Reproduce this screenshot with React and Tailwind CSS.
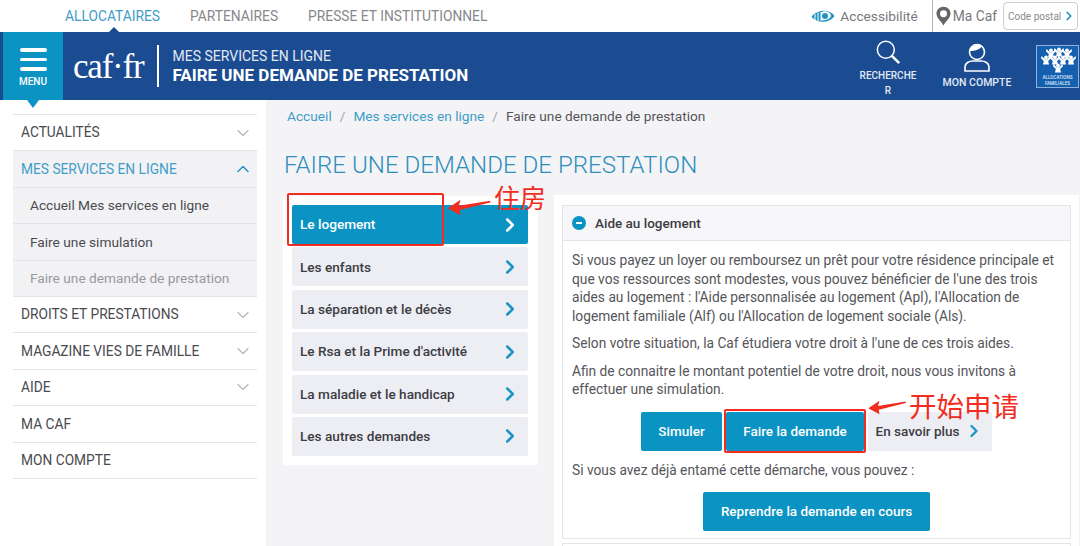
import React from 'react';
import { ChevronDown, ChevronUp, ChevronRight } from 'lucide-react';

const font = 'font-["Roboto","Liberation_Sans",sans-serif]';

function SideRow({ label, open, active }) {
    return (
        <div className={`flex h-[36.4px] items-center justify-between border-b border-[#e4e4e8] pl-[8px] pr-[4px] text-[13.75px] ${active ? 'bg-[#f2f2f5] text-[#3f9dc8]' : 'text-[#4a4a4f]'}`}>
            <span>{label}</span>
            {open
                ? <ChevronUp size={20} strokeWidth={1.8} className="text-[#1f94c4]" />
                : <ChevronDown size={20} strokeWidth={1.4} className={'text-[#b5b5ba]'} />}
        </div>
    );
}

function SubRow({ label, muted }) {
    return (
        <div className={`flex h-[36.4px] items-center border-b border-[#e4e4e8] bg-[#f2f2f5] pl-[17px] text-[13.7px] ${muted ? 'text-[#98989e]' : 'text-[#4a4a4f]'}`}>
            {label}
        </div>
    );
}

function Category({ label, active }) {
    return (
        <div className={`flex h-[39px] items-center justify-between rounded-[2px] pl-[8px] pr-[7px] text-[13.6px] font-medium ${active ? 'bg-[#0a93c3] text-white' : 'bg-[#edeef4] text-[#3c3c42]'}`}>
            <span>{label}</span>
            <ChevronRight size={22} strokeWidth={2.8} className={active ? 'text-white' : 'text-[#1b94c6]'} />
        </div>
    );
}

function RedArrow({ className }) {
    return (
        <svg viewBox="0 0 50 20" className={className}>
            <path d="M0 11 L15 1 L13 8 L50 2 L50 4 L14 13 L15 19 Z" fill="#f22c1e" />
        </svg>
    );
}

function Doll({ x, y }) {
    return (
        <g transform={`translate(${x} ${y})`}>
            <circle cx="0" cy="-2.6" r="1.9" />
            <path d="M-4.4 -4 L-1.2 -0.8 H1.2 L4.4 -4 L5 -1.8 L2.2 1 L3 4.6 H-3 L-2.2 1 L-5 -1.8 Z" />
        </g>
    );
}

function CafLogo() {
    // petit logo des allocations familiales
    return (
        <div className="flex h-[43px] w-[43px] flex-col items-center border border-[#8fb0d8] bg-[#1560ae]">
            <svg viewBox="0 0 40 29" className="h-[29px] w-[40px]" fill="#ffffff">
                <Doll x={13} y={7} />
                <Doll x={21} y={6} />
                <Doll x={29} y={7} />
                <Doll x={8} y={14} />
                <Doll x={17} y={14} />
                <Doll x={25} y={14} />
                <Doll x={33} y={14} />
                <Doll x={20} y={22} />
            </svg>
            <span className="text-center text-[4.6px] font-medium leading-[5.5px] text-[#dbe7f5]">ALLOCATIONS<br />FAMILIALES</span>
        </div>
    );
}

export default function App() {
    return (
        <div className={`relative h-[546px] w-[1080px] overflow-hidden bg-white ${font}`}>
            {/* barre du haut */}
            <div className="flex h-[32px] items-center text-[13.8px] text-[#87878c]">
                <div className="ml-[65px] flex gap-[30px]">
                    <span className="text-[#3f9dc8]">ALLOCATAIRES</span>
                    <span>PARTENAIRES</span>
                    <span>PRESSE ET INSTITUTIONNEL</span>
                </div>
                <div className="ml-auto flex h-full items-center">
                    <svg viewBox="0 0 24 14" className="mr-[5px] h-[14px] w-[24px]">
                        <path d="M0.5 8 C5 1 18 -1 23.5 7 C19 14 6 15 0.5 8Z" fill="#1f94c4" />
                        <path d="M10 3 C16 1 20 4 20 7 C19 10 14 12 10 11Z" fill="#ffffff" />
                        <circle cx="14" cy="7" r="3" fill="#1f94c4" />
                        <path d="M4 5v6M7 3.5v8.5M10 3v9" stroke="#ffffff" strokeWidth="1" />
                    </svg>
                    <span className="text-[13.7px] text-[#77777c]">Accessibilité</span>
                    <div className="ml-[14px] flex h-full items-center border-l border-[#b4b4b8] pl-[3px]">
                        <svg viewBox="0 0 16 20" className="h-[20px] w-[15px]">
                            <path fillRule="evenodd" d="M8 0 C3.5 0 0.5 3.2 0.5 7.4 C0.5 12 5 15 8 20 C11 15 15.5 12 15.5 7.4 C15.5 3.2 12.5 0 8 0Z M8 3.8 A3.7 3.7 0 1 1 8 11.2 A3.7 3.7 0 1 1 8 3.8Z" fill="#66666b" />
                        </svg>
                        <span className="ml-[2px] text-[13.8px] text-[#77777c]">Ma Caf</span>
                        <div className="ml-[6px] mr-[2px] flex h-[28px] w-[75px] items-center justify-between rounded-[4px] border border-[#cfcfd3] pl-[4px] pr-[1px] text-[10px] text-[#8a8a8f]">
                            <span>Code postal</span>
                            <ChevronRight size={14} strokeWidth={3} className="text-[#1f94c4]" />
                        </div>
                    </div>
                </div>
            </div>

            {/* bandeau bleu */}
            <div className="relative flex h-[68px] items-center bg-[#1b4b91] text-white">
                <div className="absolute left-[109px] top-[-5px] h-0 w-0 border-x-[5px] border-b-[5px] border-x-transparent border-b-[#1b4b91]" />
                <div className="relative ml-[3px] flex h-full w-[60px] flex-col items-center bg-[#0a93c3] pt-[16px]">
                    <div className="flex flex-col gap-[6px]">
                        <div className="h-[3.5px] w-[27px] rounded-full bg-white" />
                        <div className="h-[3.5px] w-[27px] rounded-full bg-white" />
                        <div className="h-[3.5px] w-[27px] rounded-full bg-white" />
                    </div>
                    <span className="mt-[5px] text-[10px] font-medium leading-[12px]">MENU</span>
                    <div className="absolute bottom-[-8px] left-[24px] h-0 w-0 border-x-[6px] border-t-[8px] border-x-transparent border-t-[#0a93c3]" />
                </div>
                <span className="ml-[10px] w-[72px] whitespace-nowrap font-['Liberation_Serif',serif] text-[35px] leading-none tracking-[-1.2px]">caf·fr</span>
                <div className="ml-[12px] h-[42px] w-[1.5px] bg-white" />
                <div className="ml-[14px] flex flex-col">
                    <span className="text-[14px] leading-[18px] text-[#e2e9f4]">MES SERVICES EN LIGNE</span>
                    <span className="text-[17px] font-bold leading-[21px]">FAIRE UNE DEMANDE DE PRESTATION</span>
                </div>
                <div className="ml-auto flex h-full items-start">
                    <div className="flex w-[60px] flex-col items-center pt-[8px]">
                        <svg viewBox="0 0 28 28" className="h-[25px] w-[25px]" fill="none" stroke="#ffffff" strokeWidth="1.7">
                            <circle cx="11" cy="11" r="9.5" />
                            <path d="M17.5 17.5 L26 26" strokeWidth="2.8" />
                        </svg>
                        <span className="mt-[4px] w-[60px] break-all text-center text-[10px] font-medium leading-[14.5px] text-[#e2e9f4]">RECHERCHER</span>
                    </div>
                    <div className="ml-[24px] flex w-[70px] flex-col items-center pt-[11px]">
                        <svg viewBox="0 0 28 30" className="h-[30px] w-[28px]" fill="none" stroke="#ffffff" strokeWidth="1.6">
                            <circle cx="14" cy="9" r="7.5" />
                            <path d="M7 8 C11 8 17 7 19 3 L14 1.5 L8 4Z" fill="#ffffff" stroke="none" />
                            <path d="M2 28 V24 C2 20 6 18 10 18 H18 C22 18 26 20 26 24 V28 Z" />
                        </svg>
                        <span className="mt-[3px] text-[10.5px] font-medium leading-[14px] text-[#e2e9f4]">MON COMPTE</span>
                    </div>
                    <div className="ml-[24px] mr-[1px] mt-[13px]">
                        <CafLogo />
                    </div>
                </div>
            </div>

            <div className="flex h-[446px]">
                {/* menu de gauche */}
                <aside className="w-[266px] shrink-0 px-[13px] pr-[9px] pt-[14px]">
                    <div className="border-t border-[#e4e4e8]">
                        <SideRow label="ACTUALITÉS" />
                        <SideRow label="MES SERVICES EN LIGNE" open active />
                        <SubRow label="Accueil Mes services en ligne" />
                        <SubRow label="Faire une simulation" />
                        <SubRow label="Faire une demande de prestation" muted />
                        <SideRow label="DROITS ET PRESTATIONS" />
                        <SideRow label="MAGAZINE VIES DE FAMILLE" />
                        <SideRow label="AIDE" />
                        <div className="flex h-[36.4px] items-center border-b border-[#e4e4e8] pl-[8px] text-[13.75px] text-[#4a4a4f]">MA CAF</div>
                        <div className="flex h-[36.4px] items-center border-b border-[#e4e4e8] pl-[8px] text-[13.75px] text-[#4a4a4f]">MON COMPTE</div>
                    </div>
                </aside>

                <main className="flex-1 bg-[#f4f4f7]">
                    <div className="flex h-[33px] items-center pl-[21px] text-[13.7px]">
                        <span className="text-[#3f9dc8]">Accueil</span>
                        <span className="mx-[8px] text-[#a5a5aa]">/</span>
                        <span className="text-[#3f9dc8]">Mes services en ligne</span>
                        <span className="mx-[8px] text-[#a5a5aa]">/</span>
                        <span className="text-[#55555a]">Faire une demande de prestation</span>
                    </div>
                    <h1 className="ml-[18px] mt-[17px] text-[24.1px] font-light leading-[30px] text-[#2d8fbb]">FAIRE UNE DEMANDE DE PRESTATION</h1>

                    <div className="mt-[16px] flex items-start">
                        <div className="ml-[17px] flex w-[255px] flex-col gap-[3.4px] bg-white pb-[9px] pl-[9px] pr-[10px] pt-[9px]">
                            <Category label="Le logement" active />
                            <Category label="Les enfants" />
                            <Category label="La séparation et le décès" />
                            <Category label="Le Rsa et la Prime d'activité" />
                            <Category label="La maladie et le handicap" />
                            <Category label="Les autres demandes" />
                        </div>

                        <div className="ml-[16px] mt-[-1px] h-[360px] w-[525px] bg-white pl-[8px] pr-[8px] pt-[10px]">
                            <div className="h-[334px] border border-[#e4e4e8]">
                                <div className="flex h-[35px] items-center border-b border-[#e4e4e8] bg-[#f6f6f8] pl-[9px]">
                                    <span className="flex h-[14px] w-[14px] items-center justify-center rounded-full bg-[#0a93c3]">
                                        <span className="h-[2px] w-[6px] bg-white" />
                                    </span>
                                    <span className="ml-[9px] text-[13.5px] font-medium text-[#3c3c42]">Aide au logement</span>
                                </div>
                                <div className="px-[9px] pt-[10px] text-[13.75px] leading-[18.7px] text-[#55555a]">
                                    <p>Si vous payez un loyer ou remboursez un prêt pour votre résidence principale et que vos ressources sont modestes, vous pouvez bénéficier de l'une des trois aides au logement : l'Aide personnalisée au logement (Apl), l'Allocation de logement familiale (Alf) ou l'Allocation de logement sociale (Als).</p>
                                    <p className="mt-[8px]">Selon votre situation, la Caf étudiera votre droit à l'une de ces trois aides.</p>
                                    <p className="mt-[9px]">Afin de connaitre le montant potentiel de votre droit, nous vous invitons à effectuer une simulation.</p>
                                    <div className="mt-[13px] flex h-[39px] items-stretch justify-center gap-[4px] text-[13.5px] font-medium">
                                        <div className="flex w-[81px] items-center justify-center rounded-[2px] bg-[#0a93c3] text-white">Simuler</div>
                                        <div className="flex w-[138px] items-center justify-center rounded-[2px] bg-[#0a93c3] text-white">Faire la demande</div>
                                        <div className="flex w-[124px] items-center justify-center gap-[5px] rounded-[2px] bg-[#edeef4] text-[#3c3c42]">
                                            En savoir plus
                                            <ChevronRight size={20} strokeWidth={2.8} className="text-[#1b94c6]" />
                                        </div>
                                    </div>
                                    <p className="mt-[10px]">Si vous avez déjà entamé cette démarche, vous pouvez :</p>
                                    <div className="mt-[12px] flex justify-center">
                                        <div className="flex h-[39px] w-[227px] items-center justify-center rounded-[2px] bg-[#0a93c3] text-[13.5px] font-medium text-white">Reprendre la demande en cours</div>
                                    </div>
                                </div>
                            </div>
                            <div className="mt-[4px] h-[20px] border border-[#e4e4e8]" />
                        </div>
                    </div>
                </main>
            </div>

            {/* annotations rouges */}
            <div className="absolute left-[287px] top-[193px] h-[53px] w-[157px] rounded-[2px] border-2 border-[#f22c1e]" />
            <RedArrow className="absolute left-[446px] top-[199px] h-[17px] w-[46px]" />
            <span className="absolute left-[494px] top-[181px] font-['Noto_Sans_CJK_SC',sans-serif] text-[26px] leading-[32px] text-[#f22c1e]">住房</span>
            <div className="absolute left-[724px] top-[409px] h-[44px] w-[142px] rounded-[2px] border-2 border-[#f22c1e]" />
            <RedArrow className="absolute left-[868px] top-[400px] h-[15px] w-[38px]" />
            <span className="absolute left-[909px] top-[388px] font-['Noto_Sans_CJK_SC',sans-serif] text-[27.5px] leading-[34px] text-[#f22c1e]">开始申请</span>
        </div>
    );
}
